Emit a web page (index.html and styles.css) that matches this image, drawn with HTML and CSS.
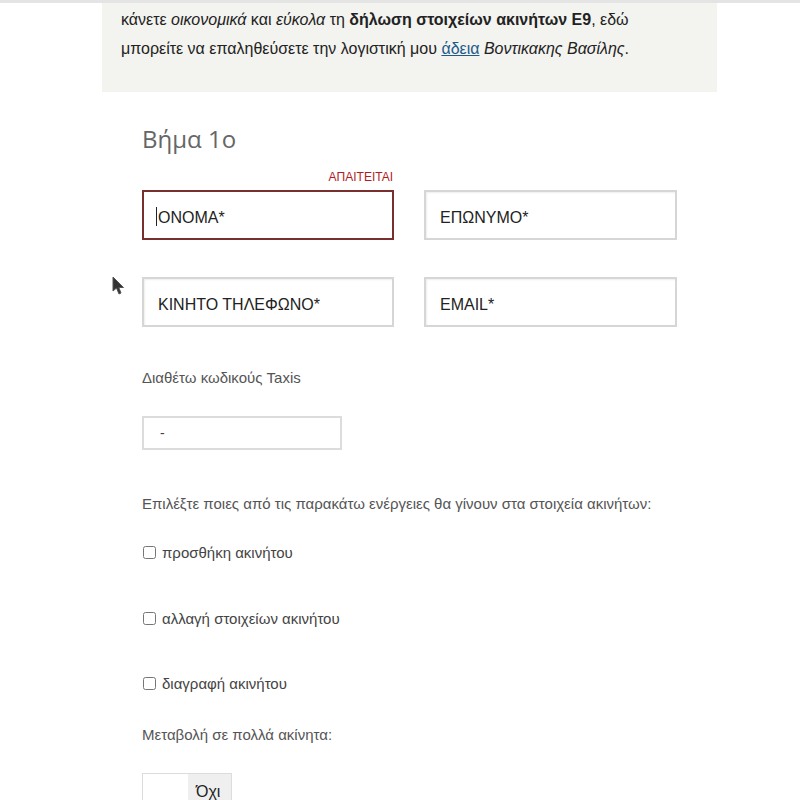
FILE: index.html
```html
<!DOCTYPE html>
<html lang="el">
<head>
  <meta charset="UTF-8">
  <title>Δήλωση Ε9</title>
  <link rel="stylesheet" href="styles.css">
</head>
<body>
  <div class="topline"></div>

  <div class="page">
    <div class="intro">
      κάνετε <em>οικονομικά</em> και <em>εύκολα</em> τη <strong>δήλωση στοιχείων ακινήτων Ε9</strong>, εδώ<br>
      μπορείτε να επαληθεύσετε την λογιστική μου <a href="#">άδεια</a> <em>Βοντικακης Βασίλης</em>.
    </div>

    <form class="step">
      <h2>Βήμα 1ο</h2>

      <div class="fields">
        <div class="field">
          <span class="required">ΑΠΑΙΤΕΙΤΑΙ</span>
          <input class="invalid" type="text" placeholder="ΟΝΟΜΑ*">
          <span class="caret"></span>
        </div>
        <div class="field">
          <input type="text" placeholder="ΕΠΩΝΥΜΟ*">
        </div>
        <div class="field">
          <input type="text" placeholder="ΚΙΝΗΤΟ ΤΗΛΕΦΩΝΟ*">
        </div>
        <div class="field">
          <input type="text" placeholder="EMAIL*">
        </div>
      </div>

      <p class="label taxis-label">Διαθέτω κωδικούς Taxis</p>
      <div class="select">-</div>

      <p class="label actions-label">Επιλέξτε ποιες από τις παρακάτω ενέργειες θα γίνουν στα στοιχεία ακινήτων:</p>
      <div class="checks">
        <label><input type="checkbox"> προσθήκη ακινήτου</label>
        <label><input type="checkbox"> αλλαγή στοιχείων ακινήτου</label>
        <label><input type="checkbox"> διαγραφή ακινήτου</label>
      </div>

      <p class="label multi-label">Μεταβολή σε πολλά ακίνητα:</p>
      <div class="toggle">
        <span class="toggle-off"></span>
        <span class="toggle-on">Όχι</span>
      </div>
    </form>
  </div>

  <!-- δείκτης ποντικιού -->
  <svg class="pointer" width="14" height="20" viewBox="0 0 14 20">
    <path d="M1 1 L1 15 L4.5 12 L7 18 L9 17 L6.8 11.5 L11.5 11.5 Z" fill="#333" stroke="#555" stroke-width="1"/>
  </svg>
</body>
</html>
```

FILE: styles.css
```css
body {
  margin: 0;
  background: #fff;
  font-family: "Liberation Sans", Arial, sans-serif;
  color: #222;
  position: relative;
  height: 800px;
  overflow: hidden;
}
.topline {
  height: 3px;
  background: #e4e4e4;
}
.page {
  margin-left: 102px;
  width: 615px;
}
.intro {
  background: #f3f3ef;
  padding: 2px 19px 29px;
  font-size: 16px;
  line-height: 29px;
  color: #222;
}
.intro a {
  color: #1d5b8c;
}
.step {
  padding-left: 40px;
}
.step h2 {
  font-family: "Open Sans", "Liberation Sans", sans-serif;
  font-size: 24px;
  font-weight: normal;
  line-height: 30px;
  color: #666;
  margin: 32px 0 36px;
}
.fields {
  display: grid;
  grid-template-columns: 252px 253px;
  column-gap: 30px;
  row-gap: 37px;
}
.field {
  position: relative;
}
.field input {
  box-sizing: border-box;
  width: 100%;
  height: 50px;
  margin: 0;
  padding: 6px 14px 0;
  border: 2px solid #d6d6d6;
  box-shadow: inset 1px 1px 2px rgba(0, 0, 0, 0.07);
  background: #fff;
  font-family: "Liberation Sans", Arial, sans-serif;
  font-size: 16px;
  outline: none;
}
.field input::placeholder {
  color: #222;
}
.field input.invalid {
  border-color: #7a2f2f;
  box-shadow: none;
}
.required {
  position: absolute;
  right: 1px;
  bottom: 100%;
  margin-bottom: 6px;
  font-size: 12px;
  color: #b01d1d;
}
.caret {
  position: absolute;
  left: 14px;
  top: 17px;
  width: 1px;
  height: 19px;
  background: #222;
}
.label {
  font-size: 15px;
  line-height: 20px;
  color: #555;
  margin: 0;
}
.taxis-label {
  margin-top: 41px;
}
.select {
  box-sizing: border-box;
  width: 200px;
  height: 34px;
  margin-top: 28px;
  padding: 7px 16px;
  border: 2px solid #dcdcdc;
  font-size: 14px;
  color: #444;
}
.actions-label {
  margin-top: 44px;
}
.checks {
  display: flex;
  flex-direction: column;
  gap: 45.5px;
  margin-top: 28.5px;
}
.checks label {
  display: flex;
  align-items: center;
  gap: 6px;
  height: 20px;
  font-size: 15px;
  color: #444;
}
.checks input {
  margin: 0 0 0 1px;
  width: 13px;
  height: 13px;
}
.multi-label {
  margin-top: 31.5px;
}
.toggle {
  display: flex;
  width: 90px;
  height: 36px;
  margin-top: 28px;
  border: 1px solid #dcdcdc;
  box-sizing: border-box;
}
.toggle-off {
  width: 45px;
  background: #fff;
}
.toggle-on {
  flex: 1;
  background: #efefef;
  font-size: 16px;
  color: #222;
  padding: 9px 0 0 8px;
}
.pointer {
  position: absolute;
  left: 112px;
  top: 276px;
}
```
